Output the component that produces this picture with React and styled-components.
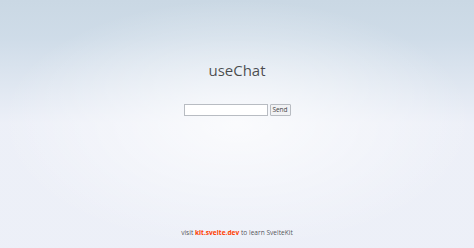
import styled, { createGlobalStyle } from "styled-components";

const GlobalStyle = createGlobalStyle`
  html, body {
    margin: 0;
    padding: 0;
  }
  body {
    font-family: "Open Sans", "Liberation Sans", sans-serif;
    color: rgba(0, 0, 0, 0.7);
    min-height: 100vh;
    background-color: hsl(209, 36%, 86%);
    background-image: radial-gradient(
        50% 50% at 50% 50%,
        rgba(255, 255, 255, 0.75) 0%,
        rgba(255, 255, 255, 0) 100%
      ),
      linear-gradient(
        180deg,
        rgb(202, 216, 228) 0%,
        hsl(209, 36%, 86%) 15%,
        hsl(224, 44%, 95%) 50%
      );
    background-size: 100vw 100vh;
  }
`;

const Page = styled.div`
  display: flex;
  flex-direction: column;
  height: 100vh;
`;

const Main = styled.main`
  flex: 1;
  display: flex;
  flex-direction: column;
  align-items: center;
  padding-top: 61px;
`;

const Title = styled.h1`
  margin: 0;
  font-size: 15px;
  line-height: 18px;
  font-weight: 400;
  color: rgba(0, 0, 0, 0.7);
`;

const Form = styled.form`
  display: flex;
  align-items: stretch;
  gap: 2px;
  margin-top: 25px;
`;

const Input = styled.input`
  box-sizing: border-box;
  width: 84px;
  height: 12px;
  padding: 0 2px;
  border: 1px solid #b8bcc2;
  background: #fff;
  font-size: 6px;
  outline: none;
`;

const Button = styled.button`
  box-sizing: border-box;
  width: 21px;
  height: 12px;
  padding: 0;
  border: 1px solid #b8bcc2;
  border-radius: 1px;
  background: #f1f2f4;
  color: #444;
  font-family: "Open Sans", "Liberation Sans", sans-serif;
  font-size: 6.5px;
  line-height: 10px;
`;

const Footer = styled.footer`
  display: flex;
  justify-content: center;
  padding: 0 0 11px;
`;

const Note = styled.p`
  margin: 0;
  font-size: 6.6px;
  line-height: 9px;
  color: rgba(0, 0, 0, 0.7);
`;

const Link = styled.a`
  color: #ff3e00;
  font-weight: 700;
  text-decoration: none;
`;

export default function App() {
  return (
    <>
      <GlobalStyle />
      <Page>
        <Main>
          <Title>useChat</Title>
          <Form onSubmit={(e) => e.preventDefault()}>
            <Input type="text" />
            <Button type="submit">Send</Button>
          </Form>
        </Main>
        <Footer>
          <Note>
            visit <Link href="#">kit.svelte.dev</Link> to learn SvelteKit
          </Note>
        </Footer>
      </Page>
    </>
  );
}
